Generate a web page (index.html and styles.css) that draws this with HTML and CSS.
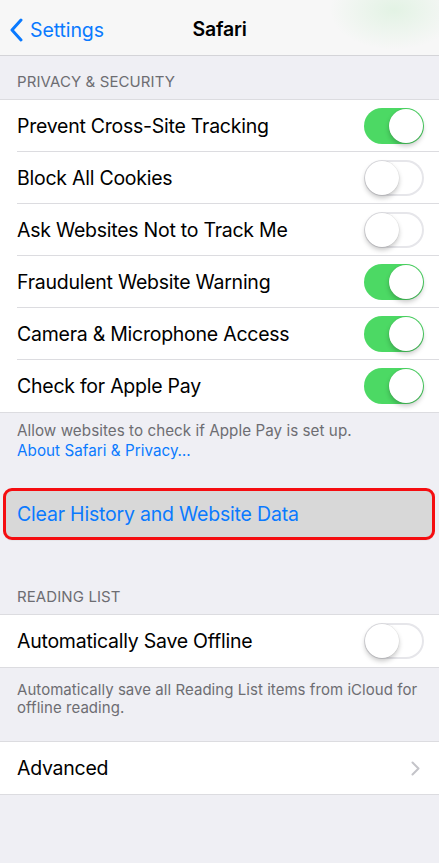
FILE: index.html
```html
<!DOCTYPE html>
<html lang="en">
<head>
<meta charset="utf-8">
<title>Safari</title>
<link rel="stylesheet" href="styles.css">
</head>
<body>
<div class="screen">
  <header class="navbar">
    <a class="back">
      <svg class="back-chevron" width="14" height="24" viewBox="0 0 14 24"><path d="M12 2 L3 12 L12 22" fill="none" stroke="#0a7aff" stroke-width="3" stroke-linecap="round" stroke-linejoin="round"/></svg>
      <span>Settings</span>
    </a>
    <h1 class="title">Safari</h1>
    <span class="glow"></span>
  </header>

  <div class="section-header">PRIVACY &amp; SECURITY</div>
  <ul class="group">
    <li class="row"><span class="label">Prevent Cross-Site Tracking</span><span class="switch on"></span></li>
    <li class="row"><span class="label">Block All Cookies</span><span class="switch"></span></li>
    <li class="row"><span class="label">Ask Websites Not to Track Me</span><span class="switch"></span></li>
    <li class="row"><span class="label">Fraudulent Website Warning</span><span class="switch on"></span></li>
    <li class="row"><span class="label">Camera &amp; Microphone Access</span><span class="switch on"></span></li>
    <li class="row"><span class="label">Check for Apple Pay</span><span class="switch on"></span></li>
  </ul>
  <p class="section-footer">Allow websites to check if Apple Pay is set up.<br><a class="link">About Safari &amp; Privacy…</a></p>

  <div class="clear-row"><span class="action">Clear History and Website Data</span></div>

  <div class="section-header reading">READING LIST</div>
  <ul class="group">
    <li class="row"><span class="label">Automatically Save Offline</span><span class="switch"></span></li>
  </ul>
  <p class="section-footer small">Automatically save all Reading List items from iCloud for offline reading.</p>

  <ul class="group advanced">
    <li class="row"><span class="label">Advanced</span>
      <svg class="disclosure" width="9" height="15" viewBox="0 0 9 15"><path d="M1.5 1.5 L7.5 7.5 L1.5 13.5" fill="none" stroke="#c4c4c9" stroke-width="2" stroke-linecap="round" stroke-linejoin="round"/></svg>
    </li>
  </ul>
</div>
</body>
</html>
```
FILE: styles.css
```css
* { box-sizing: border-box; }

html, body {
  margin: 0;
  padding: 0;
  background: #efeff4;
}

body {
  font-family: Inter, "Liberation Sans", Arial, sans-serif;
  color: #000;
  -webkit-font-smoothing: antialiased;
}

.screen {
  width: 439px;
  min-height: 863px;
  display: flex;
  flex-direction: column;
}

/* navigation bar */
.navbar {
  position: relative;
  height: 56px;
  background: #f7f7f7;
  border-bottom: 1px solid #d4d4d8;
  display: flex;
  align-items: center;
  justify-content: center;
  overflow: hidden;
}

.back {
  position: absolute;
  left: 9px;
  top: 18px;
  display: flex;
  align-items: center;
  gap: 7px;
  color: #0a7aff;
  font-size: 19.5px;
  letter-spacing: -0.1px;
}

.back-chevron { display: block; }

.title {
  margin: 0;
  padding-top: 3px;
  font-size: 19.5px;
  font-weight: 600;
  letter-spacing: -0.2px;
}

.glow {
  position: absolute;
  right: -20px;
  top: -30px;
  width: 130px;
  height: 80px;
  background: radial-gradient(ellipse at center, rgba(120, 220, 130, 0.16), rgba(120, 220, 130, 0) 70%);
}

/* grouped table */
.section-header {
  height: 43px;
  padding: 0 17px 8px;
  display: flex;
  align-items: flex-end;
  font-size: 15px;
  color: #6d6d72;
  letter-spacing: 0.1px;
}

.section-header.reading {
  height: 74px;
}

.group {
  list-style: none;
  margin: 0;
  padding: 0;
  background: #fff;
  border-top: 1px solid #dcdce0;
  border-bottom: 1px solid #dcdce0;
}

.row {
  position: relative;
  height: 52px;
  padding: 0 15px 0 17px;
  display: flex;
  align-items: center;
  justify-content: space-between;
  font-size: 19.5px;
  letter-spacing: -0.25px;
}

.row + .row::before {
  content: "";
  position: absolute;
  left: 17px;
  right: 0;
  top: -1px;
  height: 1px;
  background: #dcdce0;
}

.label { padding-bottom: 1px; }

/* iOS style switch */
.switch {
  position: relative;
  width: 60px;
  height: 36px;
  border-radius: 18px;
  background: #fff;
  box-shadow: inset 0 0 0 2px #e6e6ea;
  flex: none;
}

.switch::after {
  content: "";
  position: absolute;
  left: 1px;
  top: 1px;
  width: 34px;
  height: 34px;
  border-radius: 50%;
  background: #fff;
  box-shadow: 0 3px 5px rgba(0, 0, 0, 0.22), 0 0 0 0.5px rgba(0, 0, 0, 0.08);
}

.switch.on {
  background: #4cd964;
  box-shadow: none;
}

.switch.on::after {
  left: 25px;
}

.section-footer {
  margin: 0;
  padding: 8px 17px 0;
  font-size: 15.2px;
  line-height: 20px;
  color: #6d6d72;
  letter-spacing: 0.05px;
}

.section-footer.small {
  padding-top: 13px;
  padding-right: 10px;
  font-size: 15px;
  line-height: 17.5px;
}

.link { color: #0a7aff; }

/* highlighted action row */
.clear-row {
  margin: 27px 4px 0 3px;
  height: 52px;
  border: 3px solid #f50d10;
  border-radius: 9px;
  background: #d8d8d8;
  display: flex;
  align-items: center;
  padding: 0 11px 1px;
  box-shadow: 0 1px 0 #e6e6ea;
}

.action {
  color: #0a7aff;
  font-size: 19.5px;
  letter-spacing: -0.2px;
}

.advanced { margin-top: 25px; }

.disclosure { margin-right: 4px; }
```
